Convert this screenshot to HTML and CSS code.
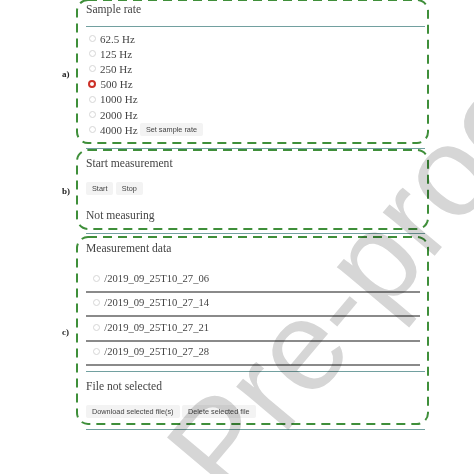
FILE: index.html
```html
<!DOCTYPE html>
<html>
<head>
<meta charset="utf-8">
<link rel="stylesheet" href="styles.css">
</head>
<body>
<div class="page">

  <div class="group">
    <div class="label">a)</div>
    <div class="content">
      <section class="card card-a">
        <div class="title title-ruled">Sample rate</div>
        <div class="radios">
          <div class="radio-row"><span class="radio"></span>62.5 Hz</div>
          <div class="radio-row"><span class="radio"></span>125 Hz</div>
          <div class="radio-row"><span class="radio"></span>250 Hz</div>
          <div class="radio-row"><span class="radio radio-on"></span>500 Hz</div>
          <div class="radio-row"><span class="radio"></span>1000 Hz</div>
          <div class="radio-row"><span class="radio"></span>2000 Hz</div>
          <div class="radio-row"><span class="radio"></span>4000 Hz<span class="btn btn-inline">Set sample rate</span></div>
        </div>
      </section>
    </div>
    <svg class="box box-a" width="353" height="146"><rect x="1" y="1" width="351" height="143" rx="11" ry="11"/></svg>
  </div>

  <div class="group">
    <div class="label">b)</div>
    <div class="content">
      <section class="card card-b">
        <div class="title">Start measurement</div>
        <div class="btns"><span class="btn">Start</span><span class="btn">Stop</span></div>
        <div class="title status">Not measuring</div>
      </section>
    </div>
    <svg class="box box-b" width="353" height="82"><rect x="1" y="1" width="351" height="79" rx="11" ry="11"/></svg>
  </div>

  <div class="group">
    <div class="label">c)</div>
    <div class="content">
      <section class="card card-c1">
        <div class="title">Measurement data</div>
        <div class="files">
          <div class="file-row"><span class="radio"></span>/2019_09_25T10_27_06</div>
          <div class="file-row"><span class="radio"></span>/2019_09_25T10_27_14</div>
          <div class="file-row"><span class="radio"></span>/2019_09_25T10_27_21</div>
          <div class="file-row"><span class="radio"></span>/2019_09_25T10_27_28</div>
        </div>
      </section>
      <section class="card card-c2">
        <div class="title">File not selected</div>
        <div class="btns"><span class="btn">Download selected file(s)</span><span class="btn">Delete selected file</span></div>
      </section>
    </div>
    <svg class="box box-c" width="353" height="190"><rect x="1" y="1" width="351" height="187" rx="11" ry="11"/></svg>
  </div>

  <div class="watermark">Journal Pre-proof</div>
</div>
</body>
</html>
```

FILE: styles.css
```css
html, body {
  margin: 0;
  padding: 0;
  background: #ffffff;
  overflow: hidden;
}

.page {
  position: relative;
  width: 474px;
  height: 474px;
  overflow: hidden;
  padding-left: 62px;
  box-sizing: border-box;
  font-family: "Liberation Serif", "Times New Roman", serif;
  color: #444444;
}

.group {
  position: relative;
  display: grid;
  grid-template-columns: 24px 339px;
}

.label {
  align-self: center;
  font-family: "Liberation Serif", serif;
  font-weight: bold;
  font-size: 9px;
  line-height: 10px;
  color: #222222;
}

.content {
  display: flex;
  flex-direction: column;
}

.card {
  border-bottom: 1px solid #72a0a0;
  display: flex;
  flex-direction: column;
}

.title {
  font-size: 11.6px;
  line-height: 14px;
  white-space: nowrap;
}

.title-ruled {
  padding: 3px 0 9px;
  border-bottom: 1px solid #72a0a0;
}

.radios {
  padding: 4px 0 10.6px;
}

.radio-row {
  display: flex;
  align-items: center;
  height: 15.2px;
  padding-left: 2.5px;
  font-size: 11px;
  white-space: nowrap;
}

.radio {
  display: inline-block;
  box-sizing: border-box;
  width: 7px;
  height: 7px;
  border: 1px solid #d6d6d6;
  border-radius: 50%;
  background: #ffffff;
  margin-right: 4.5px;
  flex: none;
}

.radio-on {
  width: 8px;
  height: 8px;
  margin-left: -0.5px;
  border: 2.4px solid #cc3128;
  background: #ffffff;
}

.btn {
  display: inline-flex;
  align-items: center;
  height: 13.3px;
  padding: 0 6px;
  background: #f3f3f3;
  border-radius: 2px;
  font-family: "Liberation Sans", Arial, sans-serif;
  font-size: 7.3px;
  color: #444444;
  white-space: nowrap;
}

.btn-inline {
  margin-left: 2.3px;
}

.btns {
  display: flex;
  gap: 2.4px;
  margin-top: 10.7px;
}

.card-b {
  padding: 8px 0 10px;
}

.status {
  margin-top: 14px;
}

.card-c1 {
  padding: 8px 0 4.4px;
}

.files {
  margin-top: 12.3px;
  margin-right: 5px;
}

.file-row {
  display: flex;
  align-items: center;
  height: 14px;
  padding: 3px 0 5.5px 6.5px;
  border-bottom: 2px solid #8a8a8a;
  font-size: 10.6px;
  white-space: nowrap;
}

.file-row .radio {
  margin-right: 4.8px;
}

.card-c2 {
  padding: 8.6px 0 10.7px;
}

.box {
  position: absolute;
  left: 14px;
  pointer-events: none;
}

.box rect {
  fill: none;
  stroke: #3f8f3a;
  stroke-width: 2;
  stroke-dasharray: 9 6;
}

.box-a { top: -1px; }
.box-b { top: 0; }
.box-c { top: 2px; }

.watermark {
  position: absolute;
  left: -65px;
  top: 851px;
  transform-origin: 0 0;
  transform: rotate(-50deg) translate(0, -108px);
  font-family: "Liberation Sans", Arial, sans-serif;
  font-size: 128px;
  line-height: 1;
  white-space: nowrap;
  color: #d6d6d6;
  mix-blend-mode: multiply;
  pointer-events: none;
}
```
